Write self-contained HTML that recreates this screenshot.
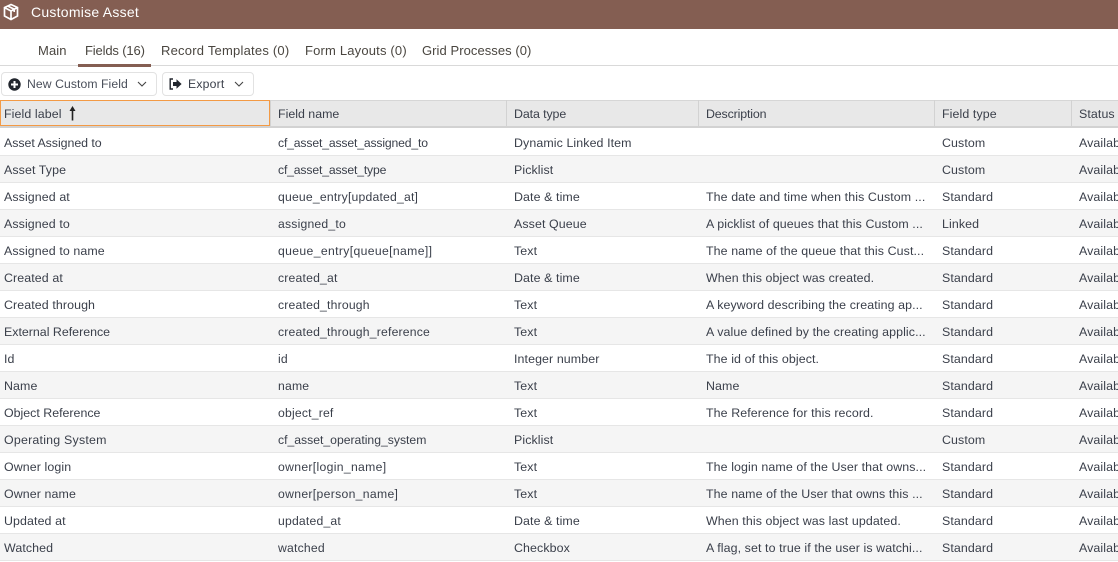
<!DOCTYPE html>
<html><head><meta charset="utf-8">
<style>
html,body{margin:0;padding:0;background:#fff}
body{width:1118px;height:562px;overflow:hidden;position:relative;font-family:"Liberation Sans",sans-serif;font-size:12.4px;color:#3a3f4a;letter-spacing:.1px}
.a{position:absolute;white-space:nowrap}
#top{left:0;top:0;width:1118px;height:29px;background:#845e52}
#title{left:31px;top:3px;color:#fff;font-size:14px;line-height:18px;letter-spacing:.25px}
.tab{top:42px;line-height:18px;color:#4a4640;font-size:13px;letter-spacing:.12px}
.btn{top:72px;height:22px;border:1px solid #e2e2e2;border-radius:4px;background:#fff}
#hd{left:0;top:100px;width:1118px;height:25px;background:#e8e8e8;border-top:1px solid #d6d6d6;border-bottom:2px solid #d2d2d2}
.hc{top:105px;line-height:18px}
.sep{top:100px;width:1px;height:26px;background:#d2d2d2}
table{position:absolute;left:0;top:129px;border-collapse:collapse;table-layout:fixed;width:1118px}
td{height:24px;padding:2px 0 0 8px;border-bottom:1px solid #e6e6e6;white-space:nowrap;overflow:hidden;line-height:24px}
td:first-child{padding-left:4px}
td:nth-child(2){font-size:12.2px;letter-spacing:.2px}
tr:nth-child(even){background:#f5f5f5}
</style></head><body>
<div class="a" id="top"></div>
<svg class="a" style="left:2px;top:3px" width="18" height="18" viewBox="0 0 18 18" fill="none" stroke="#fff" stroke-width="1.7"><path d="M9 1.5 15.5 4.5V13L9 16.5 2.5 13V4.5Z M2.5 4.5 9 8 15.5 4.5 M9 8V16.5 M5.7 3 12.2 6.2V9"/></svg>
<div class="a" id="title">Customise Asset</div>
<div class="a tab" style="left:38px">Main</div>
<div class="a tab" style="left:85px;letter-spacing:-.15px">Fields (16)</div>
<div class="a tab" style="left:161px;letter-spacing:.22px">Record Templates (0)</div>
<div class="a tab" style="left:305px;letter-spacing:.18px">Form Layouts (0)</div>
<div class="a tab" style="left:422px;letter-spacing:.06px">Grid Processes (0)</div>
<div class="a" style="left:0;top:65px;width:1118px;height:1px;background:#d9d9d9"></div>
<div class="a" style="left:78px;top:64px;width:73px;height:3px;background:#845e52"></div>

<div class="a btn" style="left:1px;width:154px"></div>
<svg class="a" style="left:8px;top:78px" width="13" height="13" viewBox="0 0 13 13"><circle cx="6.5" cy="6.5" r="6.2" fill="#22262e"/><path d="M6.5 3V10M3 6.5H10" stroke="#fff" stroke-width="2"/></svg>
<div class="a" style="left:27px;top:75px;line-height:18px;color:#4a4f5a;font-size:12.2px;letter-spacing:.08px">New Custom Field</div>
<svg class="a" style="left:137px;top:81px" width="10" height="7" viewBox="0 0 10 7" fill="none" stroke="#444" stroke-width="1.1"><path d="M1 1 5 5 9 1"/></svg>

<div class="a btn" style="left:162px;width:90px"></div>
<svg class="a" style="left:169px;top:78px" width="13" height="12" viewBox="0 0 13 12"><path d="M4 1H1.2V11H4" fill="none" stroke="#22262e" stroke-width="1.4"/><path d="M4 4H7.5V1.2L12.6 6 7.5 10.8V8H4Z" fill="#22262e"/></svg>
<div class="a" style="left:188px;top:75px;line-height:18px;font-size:12.2px;letter-spacing:.2px">Export</div>
<svg class="a" style="left:234px;top:81px" width="10" height="7" viewBox="0 0 10 7" fill="none" stroke="#444" stroke-width="1.1"><path d="M1 1 5 5 9 1"/></svg>

<div class="a" id="hd"></div>
<div class="a" style="left:0;top:100px;width:268px;height:24px;border:1px solid #f39a45;background:#e8e8e8"></div>
<div class="a hc" style="left:4px">Field label</div>
<svg class="a" style="left:68px;top:106px" width="9" height="15" viewBox="0 0 9 15"><path d="M4.5 0 7.5 5H5.3V14.5H3.7V5H1.5Z" fill="#222"/></svg>
<div class="a sep" style="left:270px"></div>
<div class="a sep" style="left:506px"></div>
<div class="a sep" style="left:698px"></div>
<div class="a sep" style="left:934px"></div>
<div class="a sep" style="left:1071px"></div>
<div class="a hc" style="left:278px;letter-spacing:0">Field name</div>
<div class="a hc" style="left:514px;letter-spacing:-.1px">Data type</div>
<div class="a hc" style="left:706px;letter-spacing:-.15px">Description</div>
<div class="a hc" style="left:942px">Field type</div>
<div class="a hc" style="left:1079px">Status</div>

<table>
<colgroup><col style="width:270px"><col style="width:236px"><col style="width:192px"><col style="width:236px"><col style="width:137px"><col style="width:47px"></colgroup>
<tr><td style="letter-spacing:-.05px">Asset Assigned to</td><td style="letter-spacing:-.15px">cf_asset_asset_assigned_to</td><td>Dynamic Linked Item</td><td></td><td>Custom</td><td>Available</td></tr>
<tr><td>Asset Type</td><td style="letter-spacing:-.15px">cf_asset_asset_type</td><td>Picklist</td><td></td><td>Custom</td><td>Available</td></tr>
<tr><td>Assigned at</td><td>queue_entry[updated_at]</td><td>Date &amp; time</td><td>The date and time when this Custom ...</td><td>Standard</td><td>Available</td></tr>
<tr><td>Assigned to</td><td>assigned_to</td><td>Asset Queue</td><td>A picklist of queues that this Custom ...</td><td>Linked</td><td>Available</td></tr>
<tr><td>Assigned to name</td><td style="letter-spacing:.36px">queue_entry[queue[name]]</td><td>Text</td><td>The name of the queue that this Cust...</td><td>Standard</td><td>Available</td></tr>
<tr><td>Created at</td><td>created_at</td><td>Date &amp; time</td><td>When this object was created.</td><td>Standard</td><td>Available</td></tr>
<tr><td>Created through</td><td>created_through</td><td>Text</td><td>A keyword describing the creating ap...</td><td>Standard</td><td>Available</td></tr>
<tr><td style="letter-spacing:0">External Reference</td><td>created_through_reference</td><td>Text</td><td>A value defined by the creating applic...</td><td>Standard</td><td>Available</td></tr>
<tr><td>Id</td><td>id</td><td>Integer number</td><td>The id of this object.</td><td>Standard</td><td>Available</td></tr>
<tr><td>Name</td><td>name</td><td>Text</td><td>Name</td><td>Standard</td><td>Available</td></tr>
<tr><td style="letter-spacing:0">Object Reference</td><td>object_ref</td><td>Text</td><td>The Reference for this record.</td><td>Standard</td><td>Available</td></tr>
<tr><td style="letter-spacing:.22px">Operating System</td><td style="letter-spacing:0">cf_asset_operating_system</td><td>Picklist</td><td></td><td>Custom</td><td>Available</td></tr>
<tr><td>Owner login</td><td style="letter-spacing:.32px">owner[login_name]</td><td>Text</td><td>The login name of the User that owns...</td><td>Standard</td><td>Available</td></tr>
<tr><td>Owner name</td><td style="letter-spacing:.32px">owner[person_name]</td><td>Text</td><td>The name of the User that owns this ...</td><td>Standard</td><td>Available</td></tr>
<tr><td>Updated at</td><td>updated_at</td><td>Date &amp; time</td><td>When this object was last updated.</td><td>Standard</td><td>Available</td></tr>
<tr><td>Watched</td><td>watched</td><td>Checkbox</td><td>A flag, set to true if the user is watchi...</td><td>Standard</td><td>Available</td></tr>
</table>
</body></html>
